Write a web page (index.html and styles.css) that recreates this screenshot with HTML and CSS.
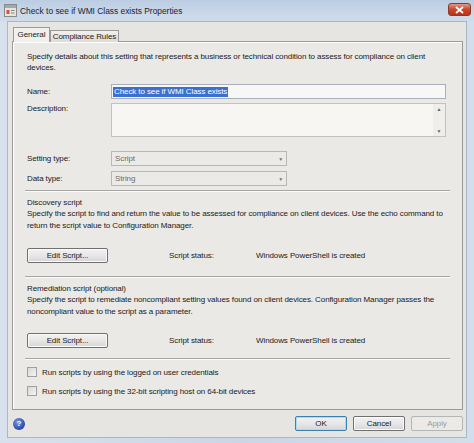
FILE: index.html
```html
<!DOCTYPE html>
<html>
<head>
<meta charset="utf-8">
<link rel="stylesheet" href="styles.css">
</head>
<body>
<div class="window">
  <div class="titlebar">
    <svg class="appicon" width="13" height="13" viewBox="0 0 13 13">
      <rect x="0.5" y="0.5" width="12" height="12" fill="#e8e4dc" stroke="#8a8a8a"/>
      <rect x="1" y="1" width="11" height="3" fill="#9aa9bf"/>
      <rect x="2.5" y="6" width="3" height="4" fill="#c85a3a"/>
      <rect x="7" y="6" width="3.5" height="1" fill="#888"/>
      <rect x="7" y="8.5" width="3.5" height="1" fill="#888"/>
    </svg>
    <span class="title">Check to see if WMI Class exists Properties</span>
    <div class="close"><svg width="9" height="8" viewBox="0 0 9 8"><path d="M1 1 L8 7 M8 1 L1 7" stroke="#fff" stroke-width="1.8"/></svg></div>
  </div>
  <div class="client">
    <div class="tabs">
      <div class="tab active">General</div>
      <div class="tab wide">Compliance Rules</div>
    </div>
    <div class="panel">
      <p class="desc">Specify details about this setting that represents a business or technical condition to assess for compliance on client devices.</p>
      <div class="row name-row">
        <span class="label">Name:</span>
        <div class="input"><span class="sel">Check to see if WMI Class exists</span></div>
      </div>
      <div class="row desc-row">
        <span class="label">Description:</span>
        <div class="textarea">
          <div class="scroll"><span class="arr">&#9650;</span><span class="arr">&#9660;</span></div>
        </div>
      </div>
      <div class="row combo-row first">
        <span class="label">Setting type:</span>
        <div class="combo"><span>Script</span><span class="drop">&#9660;</span></div>
      </div>
      <div class="row combo-row second">
        <span class="label">Data type:</span>
        <div class="combo"><span>String</span><span class="drop">&#9660;</span></div>
      </div>
      <div class="sep sep1"></div>
      <div class="section">
        <div class="heading">Discovery script</div>
        <p class="text">Specify the script to find and return the value to be assessed for compliance on client devices. Use the echo command to return the script value to Configuration Manager.</p>
        <div class="status-row s1">
          <div class="btn edit">Edit Script...</div>
          <span class="status-label">Script status:</span>
          <span class="status-value">Windows PowerShell is created</span>
        </div>
      </div>
      <div class="sep sep2"></div>
      <div class="section">
        <div class="heading">Remediation script (optional)</div>
        <p class="text">Specify the script to remediate noncompliant setting values found on client devices. Configuration Manager passes the noncompliant value to the script as a parameter.</p>
        <div class="status-row s2">
          <div class="btn edit">Edit Script...</div>
          <span class="status-label">Script status:</span>
          <span class="status-value">Windows PowerShell is created</span>
        </div>
      </div>
      <div class="sep sep3"></div>
      <div class="checks">
        <div class="check"><span class="box"></span><span>Run scripts by using the logged on user credentials</span></div>
        <div class="check"><span class="box"></span><span>Run scripts by using the 32-bit scripting host on 64-bit devices</span></div>
      </div>
    </div>
    <div class="footer">
      <div class="help">?</div>
      <div class="buttons">
        <div class="btn ok">OK</div>
        <div class="btn">Cancel</div>
        <div class="btn disabled">Apply</div>
      </div>
    </div>
  </div>
</div>
</body>
</html>
```
FILE: styles.css
```css
html, body {
  margin: 0;
  padding: 0;
  width: 474px;
  height: 443px;
  overflow: hidden;
  background: #cfdbea;
}
.window {
  width: 474px;
  height: 443px;
  display: flex;
  flex-direction: column;
  font-family: "Liberation Sans", Arial, sans-serif;
  font-size: 8px;
  letter-spacing: -0.1px;
  color: #1a1a1a;
  background: linear-gradient(to right, #d8e2ee, #c9d6e6 50%, #d3deeb);
}
.titlebar {
  height: 21px;
  display: flex;
  align-items: center;
  padding: 0 3px 0 4px;
  background: linear-gradient(to bottom, #bccde2, #c9d7e8 60%, #cfdcec);
  flex: none;
}
.appicon { flex: none; margin-right: 3px; }
.title {
  font-size: 8.4px;
  letter-spacing: 0;
  color: #1c2430;
  flex: 1;
}
.close {
  width: 21px;
  height: 11px;
  border-radius: 3px;
  border: 1px solid #8a3a2c;
  background: linear-gradient(to bottom, #e49a86, #c9452c 50%, #b8321c);
  display: flex;
  align-items: center;
  justify-content: center;
  margin-top: -2px;
}
.client {
  flex: 1;
  margin: 0 7px 5px 7px;
  background: #e7e5e1;
  border: 1px solid #a9b6c6;
  display: flex;
  flex-direction: column;
  padding: 5px 3px 0 4px;
}
.tabs {
  display: flex;
  height: 14px;
  padding-left: 1px;
  position: relative;
  z-index: 1;
}
.tab {
  width: 67px;
  height: 11px;
  margin-top: 3px;
  line-height: 11px;
  text-align: center;
  border: 1px solid #9a9a9a;
  border-bottom: none;
  background: linear-gradient(to bottom, #f2f1ef, #dddbd7);
  color: #222;
}
.tab.active {
  width: 35px;
  height: 14px;
  margin-top: 0;
  line-height: 14px;
  background: #f1f0ed;
  margin-bottom: -1px;
}
.panel {
  height: 369px;
  border: 1px solid #9a9a9a;
  background: #ebe9e5;
  box-shadow: inset 1px 1px 0 #fff;
  padding: 0 14px 0 14px;
  box-sizing: border-box;
  display: flex;
  flex-direction: column;
}
.desc {
  margin: 9px 0 0 0;
  line-height: 11px;
  width: 405px;
}
.row {
  display: flex;
  align-items: flex-start;
}
.label { width: 84px; flex: none; line-height: 11px; }
.name-row { margin-top: 11px; height: 15px; align-items: center; }
.input {
  width: 332px;
  height: 13px;
  border: 1px solid #a8b0bc;
  background: #f7f7f5;
  display: flex;
  align-items: center;
  padding-left: 1px;
}
.sel {
  background: #3b6fd2;
  color: #fff;
  line-height: 10px;
  padding: 0 1px;
}
.desc-row { margin-top: 4px; }
.textarea {
  width: 333px;
  height: 32px;
  border: 1px solid #c2c2c2;
  background: #f7f6f3;
  display: flex;
  justify-content: flex-end;
}
.scroll {
  width: 12px;
  display: flex;
  flex-direction: column;
  justify-content: space-between;
  align-items: center;
  background: #efeeeb;
  padding: 2px 0;
}
.arr { font-size: 5px; color: #666; }
.combo-row { align-items: center; height: 15px; }
.combo-row.first { margin-top: 14px; }
.combo-row.second { margin-top: 5px; }
.combo {
  width: 168px;
  height: 13px;
  border: 1px solid #b7b7b7;
  background: #eceae6;
  display: flex;
  align-items: center;
  justify-content: space-between;
  padding: 0 3px 0 3px;
  color: #6d6d6d;
}
.drop { font-size: 5px; color: #777; }
.sep {
  height: 1px;
  background: #a5a5a5;
  border-bottom: 1px solid #fafafa;
  margin-left: -2px;
  margin-right: -2px;
}
.sep1 { margin-top: 4px; }
.sep2 { margin-top: 13px; }
.sep3 { margin-top: 10px; }
.section { display: flex; flex-direction: column; }
.heading { margin-top: 5px; line-height: 11px; }
.text { margin: 0; line-height: 12px; width: 425px; }
.status-row {
  display: flex;
  align-items: center;
  height: 15px;
}
.s1 { margin-top: 16px; }
.s2 { margin-top: 15px; }
.btn {
  width: 50px;
  height: 13px;
  border: 1px solid #707070;
  border-radius: 2px;
  background: linear-gradient(to bottom, #f2f2f2, #e7e7e7 50%, #d6d6d6);
  display: flex;
  align-items: center;
  justify-content: center;
  color: #1a1a1a;
  box-shadow: inset 0 0 0 1px #fbfbfb;
}
.btn.edit { width: 79px; }
.status-label { margin-left: 61px; width: 87px; }
.checks { display: flex; flex-direction: column; margin-top: 7px; gap: 9px; }
.check { display: flex; align-items: center; height: 10px; }
.box {
  width: 8px;
  height: 8px;
  border: 1px solid #a0a0a0;
  background: linear-gradient(135deg, #d8d8d8, #f4f4f4);
  margin-right: 5px;
  flex: none;
}
.footer {
  display: flex;
  align-items: center;
  justify-content: space-between;
  height: 27px;
  padding-left: 1px;
}
.help {
  width: 12px;
  height: 12px;
  border-radius: 50%;
  background: radial-gradient(circle at 40% 35%, #7c9ae0, #2948a8 70%, #1d3580);
  color: #fff;
  font-weight: bold;
  font-size: 8px;
  letter-spacing: 0;
  display: flex;
  align-items: center;
  justify-content: center;
}
.buttons { display: flex; gap: 6px; }
.btn.ok { border-color: #3c7fb1; box-shadow: inset 0 0 0 1px #a9dcf5; }
.btn.disabled { border-color: #b5b5b5; background: #ebeae7; color: #9a9a9a; box-shadow: none; }
```
